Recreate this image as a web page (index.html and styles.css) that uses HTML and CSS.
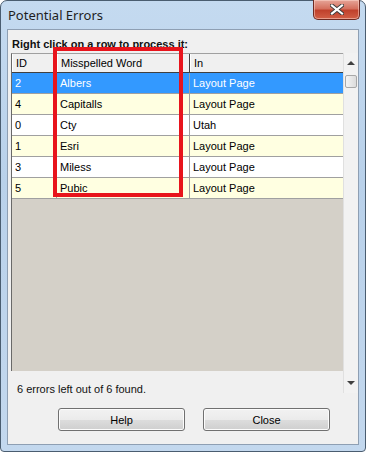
FILE: index.html
```html
<!DOCTYPE html>
<html lang="en">
<head>
    <meta charset="UTF-8">
    <title>Potential Errors</title>
    <link rel="stylesheet" href="styles.css">
</head>
<body>
    <div class="window">
        <div class="titlebar">
            <span class="title">Potential Errors</span>
            <button class="close-x">
                <svg width="14" height="11" viewBox="0 0 14 11">
                    <path d="M2 1.5 L12 9.5 M12 1.5 L2 9.5" stroke="#3a3a3a" stroke-width="4" stroke-linecap="square"/>
                    <path d="M2 1.5 L12 9.5 M12 1.5 L2 9.5" stroke="#ffffff" stroke-width="2.2" stroke-linecap="square"/>
                </svg>
            </button>
        </div>

        <div class="panel">
            <div class="hint">Right click on a row to process it:</div>

            <div class="grid-wrap">
                <div class="left-col">
                    <div class="grid">
                        <div class="row head">
                            <div class="cell c-id">ID</div>
                            <div class="cell c-word">Misspelled Word</div>
                            <div class="cell c-in">In</div>
                        </div>
                        <div class="row selected">
                            <div class="cell c-id">2</div>
                            <div class="cell c-word">Albers</div>
                            <div class="cell c-in">Layout Page</div>
                        </div>
                        <div class="row alt">
                            <div class="cell c-id">4</div>
                            <div class="cell c-word">Capitalls</div>
                            <div class="cell c-in">Layout Page</div>
                        </div>
                        <div class="row">
                            <div class="cell c-id">0</div>
                            <div class="cell c-word">Cty</div>
                            <div class="cell c-in">Utah</div>
                        </div>
                        <div class="row alt">
                            <div class="cell c-id">1</div>
                            <div class="cell c-word">Esri</div>
                            <div class="cell c-in">Layout Page</div>
                        </div>
                        <div class="row">
                            <div class="cell c-id">3</div>
                            <div class="cell c-word">Miless</div>
                            <div class="cell c-in">Layout Page</div>
                        </div>
                        <div class="row alt">
                            <div class="cell c-id">5</div>
                            <div class="cell c-word">Pubic</div>
                            <div class="cell c-in">Layout Page</div>
                        </div>
                        <div class="highlight"></div>
                    </div>
                    <div class="status">6 errors left out of 6 found.</div>
                </div>

                <div class="scrollbar">
                    <div class="arrow up"></div>
                    <div class="thumb"></div>
                    <div class="track"></div>
                    <div class="arrow down"></div>
                </div>
            </div>

            <div class="buttons">
                <button class="btn">Help</button>
                <button class="btn">Close</button>
            </div>
        </div>
    </div>
</body>
</html>
```

FILE: styles.css
```css
body {
    margin: 0;
    padding: 0;
    background: #ffffff;
    font-family: "Liberation Sans", Arial, sans-serif;
    font-size: 11px;
    color: #000;
}

.window {
    width: 366px;
    height: 452px;
    box-sizing: border-box;
    border: 1px solid #4a5d70;
    border-radius: 7px 7px 4px 4px;
    background: linear-gradient(180deg, #c4daf0 0%, #b9d1ea 40%, #c3d8ee 100%);
    padding: 0 6px 6px 6px;
    display: flex;
    flex-direction: column;
}

.titlebar {
    height: 28px;
    display: flex;
    align-items: flex-start;
    justify-content: space-between;
}

.title {
    font-family: "Noto Sans", "Liberation Sans", sans-serif;
    font-size: 13px;
    color: #1e1e1e;
    padding: 5px 0 0 1px;
}

.close-x {
    width: 47px;
    height: 20px;
    margin: -1px -1px 0 0;
    border: 1px solid #6e2a22;
    border-top: none;
    border-radius: 0 0 5px 5px;
    background: linear-gradient(180deg, #e6a598 0%, #d5715f 45%, #c0412c 55%, #d25f46 100%);
    display: flex;
    align-items: center;
    justify-content: center;
    padding: 0;
    box-shadow: inset 0 0 0 1px rgba(255, 220, 210, 0.5);
}

.panel {
    flex: 1;
    border: 1px solid #8e9fb3;
    background: #f0f0f0;
    padding: 7px 0 0 3px;
    display: flex;
    flex-direction: column;
}

.hint {
    font-weight: bold;
    line-height: 14px;
    padding-left: 1px;
    color: #111;
}

.grid-wrap {
    display: flex;
    margin-top: 2px;
}

.left-col {
    width: 333px;
    display: flex;
    flex-direction: column;
}

.grid {
    position: relative;
    height: 317px;
    background: #d4d0c8;
    border-left: 1px solid #696969;
    border-top: 1px solid #a0a0a0;
}

.row {
    display: flex;
    height: 20px;
    border-bottom: 1px solid #a0a0a0;
    background: #ffffff;
}

.row.alt {
    background: #ffffe1;
}

.row.selected {
    background: #3399ff;
    color: #ffffff;
}

.row.head {
    height: 18px;
    background: #f0f0f0;
    border-bottom: 1px solid #404040;
}

.cell {
    box-sizing: border-box;
    padding-left: 3px;
    line-height: 20px;
    border-right: 1px solid #a0a0a0;
    white-space: nowrap;
}

.head .cell {
    line-height: 18px;
    border-right: 1px solid #404040;
    border-left: 1px solid #ffffff;
}

.c-id {
    width: 45px;
}

.c-word {
    width: 133px;
}

.c-in {
    flex: 1;
    border-right: none;
}

.head .c-in {
    border-right: none;
}

.highlight {
    position: absolute;
    left: 41px;
    top: -7px;
    width: 122px;
    height: 142px;
    border: 4px solid #e8141c;
}

.status {
    margin-top: 11px;
    padding-left: 6px;
    line-height: 14px;
    color: #111;
}

.scrollbar {
    width: 14px;
    height: 340px;
    background: #f2f2f2;
    border-left: 1px solid #e0e0e0;
    display: flex;
    flex-direction: column;
    align-items: center;
}

.arrow {
    width: 0;
    height: 0;
    border-left: 4px solid transparent;
    border-right: 4px solid transparent;
}

.arrow.up {
    margin-top: 8px;
    border-bottom: 4px solid #404040;
}

.arrow.down {
    margin-bottom: 8px;
    border-top: 4px solid #404040;
}

.thumb {
    margin-top: 10px;
    width: 12px;
    height: 13px;
    box-sizing: border-box;
    border: 1px solid #a8a8a8;
    border-radius: 2px;
    background: linear-gradient(90deg, #f4f4f4, #dcdcdc);
}

.track {
    flex: 1;
}

.buttons {
    display: flex;
    gap: 18px;
    padding-left: 47px;
    margin-top: 12px;
}

.btn {
    width: 127px;
    height: 23px;
    border: 1px solid #707070;
    border-radius: 3px;
    background: linear-gradient(180deg, #f2f2f2 0%, #ebebeb 50%, #dddddd 51%, #cfcfcf 100%);
    font-family: "Liberation Sans", Arial, sans-serif;
    font-size: 11px;
    color: #000;
    padding: 0;
    box-shadow: inset 0 0 0 1px #fcfcfc;
}
```
